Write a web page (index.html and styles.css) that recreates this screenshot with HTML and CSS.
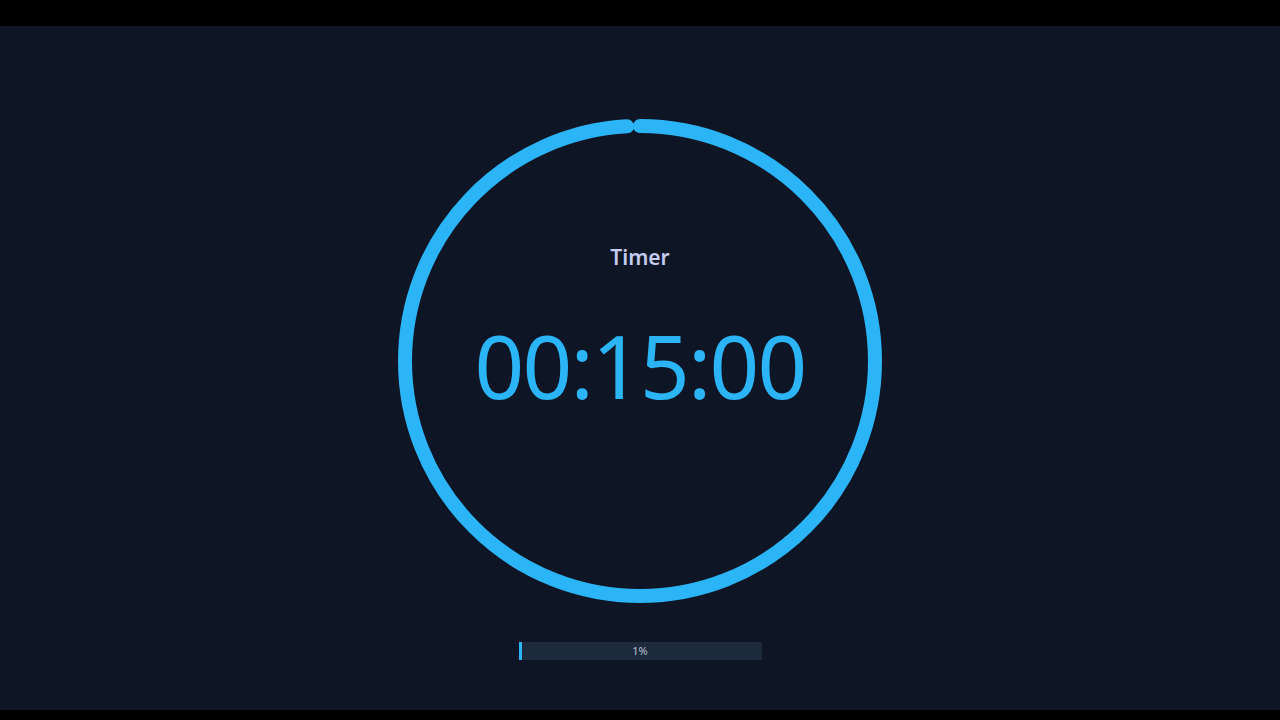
FILE: index.html
```html
<!DOCTYPE html>
<html>
<head>
<meta charset="utf-8">
<link rel="stylesheet" href="styles.css">
</head>
<body>
<div class="screen">
  <div class="dial">
    <svg class="ring" width="500" height="500" viewBox="0 0 500 500">
      <circle cx="250" cy="250" r="235" fill="none" stroke="#2bb4f6" stroke-width="14" stroke-linecap="round" stroke-dasharray="1463 100" transform="rotate(-90 250 250)"/>
    </svg>
    <div class="face">
      <div class="label">Timer</div>
      <div class="time">00:15:00</div>
    </div>
  </div>
  <div class="bar">
    <div class="fill" style="width:1%"></div>
    <div class="pct">1%</div>
  </div>
</div>
</body>
</html>
```

FILE: styles.css
```css
html, body {
  margin: 0;
  padding: 0;
  background: #000;
}
body {
  width: 1280px;
  height: 720px;
  padding-top: 26px;
  box-sizing: border-box;
  font-family: "Noto Sans", "Open Sans", sans-serif;
}
.screen {
  height: 684px;
  background: #0e1626;
  display: flex;
  flex-direction: column;
  align-items: center;
  padding-top: 85px;
  box-sizing: border-box;
}
.dial {
  display: grid;
  width: 500px;
  height: 500px;
}
.ring, .face {
  grid-area: 1 / 1;
}
.face {
  display: flex;
  flex-direction: column;
  align-items: center;
  padding-top: 132px;
}
.label {
  font-size: 21px;
  line-height: 28px;
  font-weight: 600;
  color: #c3cbee;
}
.time {
  margin-top: 51px;
  font-size: 87px;
  line-height: 87px;
  font-weight: 400;
  color: #2bb4f6;
  letter-spacing: -1.8px;
}
.bar {
  margin-top: 31px;
  width: 243px;
  height: 18px;
  background: #1d2a3c;
  display: grid;
}
.fill, .pct {
  grid-area: 1 / 1;
}
.fill {
  background: #2bb4f6;
  height: 100%;
  min-width: 3px;
}
.pct {
  text-align: center;
  font-size: 11px;
  line-height: 18px;
  color: #b5c0cf;
}
```
